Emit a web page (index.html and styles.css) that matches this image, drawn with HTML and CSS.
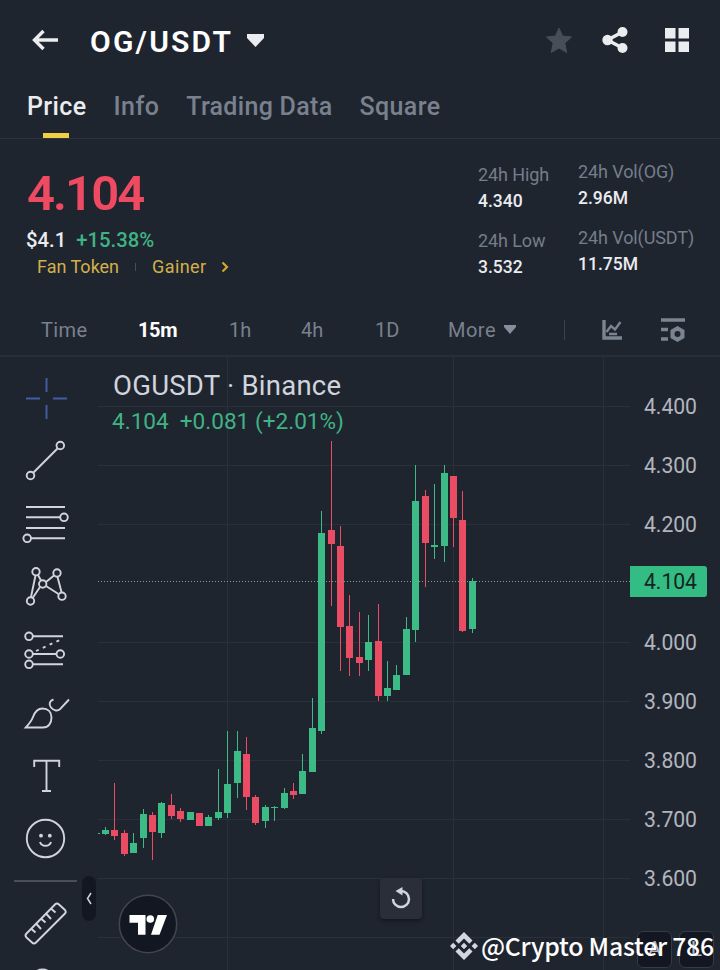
FILE: index.html
```
<!DOCTYPE html>
<html lang="en">
<head>
    <meta charset="UTF-8">
    <meta name="viewport" content="width=device-width, initial-scale=1.0">
    <title>OG/USDT</title>
    <link rel="stylesheet" href="styles.css">
</head>
<body>
    <!-- Header -->
    <header class="header">
        <svg class="back" width="28" height="22" viewBox="0 0 28 22"><path d="M12.500 2 3.500 11l9 9M4 11h23" fill="none" stroke="#eaecef" stroke-width="3.400"/></svg>
        <h1 class="pair">OG/USDT</h1>
        <svg class="caret" width="17" height="13" viewBox="0 0 17 13"><path d="M0 0h17v4L8.500 13 0 4z" fill="#eaecef"/></svg>
        <div class="header-icons">
            <svg width="28" height="28" viewBox="0 0 28 28"><path d="M14 2l3.500 8 9 1-6.700 6.200 1.900 9.300L14 22l-7.700 4.500 1.900-9.300L1.500 11l9-1z" fill="#474d59" stroke="#474d59" stroke-linejoin="round"/></svg>
            <svg class="share" width="28" height="28" viewBox="0 0 28 28"><path d="M21.500 6 6.500 14l15 8" fill="none" stroke="#eaecef" stroke-width="3.500"/><g fill="#eaecef"><circle cx="21.500" cy="6" r="5"/><circle cx="6.500" cy="14" r="5.200"/><circle cx="21.500" cy="22" r="5"/></g></svg>
            <svg width="28" height="28" viewBox="0 0 28 28"><path d="M2 2h10.500v10.500H2zM15.500 2H26v10.500H15.500zM2 15.500h10.500V26H2zM15.500 15.500H26V26H15.500z" fill="#eaecef"/></svg>
        </div>
    </header>

    <!-- Tabs -->
    <nav class="tabs">
        <span class="tab active">Price</span>
        <span class="tab info">Info</span>
        <span class="tab trading">Trading Data</span>
        <span class="tab">Square</span>
    </nav>

    <!-- Price summary -->
    <section class="summary">
        <div class="price-block">
            <div class="last-price">4.104</div>
            <div class="change"><span class="usd">$4.1</span><span class="percent">+15.38%</span></div>
            <div class="tags">
                <span class="fan">Fan Token</span>
                <i class="tag-line"></i>
                <span class="gainer">Gainer</span>
                <svg width="8" height="12" viewBox="0 0 8 12"><path d="M1.500 1.500 6 6l-4.500 4.500" fill="none" stroke="#d3a82a" stroke-width="2.200"/></svg>
            </div>
        </div>
        <div class="stats">
            <div class="stat"><span class="label">24h High</span><span class="value">4.340</span></div>
            <div class="stat"><span class="label">24h Low</span><span class="value">3.532</span></div>
        </div>
        <div class="stats vol">
            <div class="stat"><span class="label">24h Vol(OG)</span><span class="value">2.96M</span></div>
            <div class="stat"><span class="label">24h Vol(USDT)</span><span class="value">11.75M</span></div>
        </div>
    </section>

    <!-- Intervals -->
    <div class="intervals">
        <span class="time">Time</span>
        <span class="selected">15m</span>
        <span class="hour">1h</span>
        <span class="hour4">4h</span>
        <span class="day">1D</span>
        <span class="more">More</span>
        <svg class="more-caret" width="12" height="9" viewBox="0 0 12 9"><path d="M0 0h12v2L6 9 0 2z" fill="#848e9c"/></svg>
        <i class="interval-line"></i>
        <svg class="indicator" width="20" height="20" viewBox="0 0 20 20"><path d="M2 0v18h18" fill="none" stroke="#7b8491" stroke-width="3.400"/><path d="M4.500 12 9 6l4 3.500L18.500 2M7 14h8" fill="none" stroke="#7b8491" stroke-width="2.400"/></svg>
        <svg class="settings" width="26" height="26" viewBox="0 0 26 26"><path d="M1 3h24M1 12.500h7M1 22h7" stroke="#7b8491" stroke-width="3.600"/><path d="m17.500 9 7 4v8l-7 4-7-4v-8z" fill="#7b8491"/><circle cx="17.500" cy="17" r="3" fill="#1f252f"/></svg>
    </div>

    <!-- Chart -->
    <main class="chart">
        <aside class="tools">
            <svg viewBox="0 367 98 63"><path d="M46.500 378v14M46.500 405v14M26 398.500h14M53 398.500h14" stroke="#415da6"/></svg>
            <svg viewBox="0 430 98 63"><path d="m33.500 472.500 24-24"/><circle cx="60.300" cy="445.500" r="3.800"/><circle cx="30.500" cy="475.500" r="3.800"/></svg>
            <svg viewBox="0 493 98 63"><path d="M26 507h39M26 517.300h34M26 528h39M31 538.300h34"/><circle cx="64" cy="517.300" r="3.800"/><circle cx="27.200" cy="538.300" r="3.800"/></svg>
            <svg viewBox="0 556 98 63"><path d="M35.500 575.500 31 597M38 575l3 5.500M40 587l-7 10.500M46 582l8-6.500M57.500 577l4 15M46 586l12.500 8"/><circle cx="36" cy="571.700" r="3.700"/><circle cx="57" cy="573" r="3.700"/><circle cx="42.700" cy="584" r="3.700"/><circle cx="30.500" cy="601" r="3.700"/><circle cx="62" cy="596.200" r="3.700"/></svg>
            <svg viewBox="0 619 98 63"><path d="M33 636.300h30M33 654h23.500M33 664.300h30"/><path d="m36 651 26-12" stroke-dasharray="3 4.500"/><circle cx="29" cy="636.300" r="3.800"/><circle cx="29" cy="654" r="3.800"/><circle cx="60.300" cy="654" r="3.800"/><circle cx="29" cy="664.300" r="3.800"/></svg>
            <svg viewBox="0 682 98 63"><path d="M25.800 727.500H43c5.500 0 8.500-4.500 8.500-10 0-5.500-3.500-9-9-9-4.500 0-7.500 3-9.500 8.500-1.500 4-4 7-7.200 10.500zM53.500 699.500c-4 1-5 5-2.500 8 3 3.500 6.500 4 9.500 1.200l8.500-9.200"/></svg>
            <svg viewBox="0 745 98 63"><path d="M34.200 767v-6.300h25v6.300M46.500 761v30M42 791h9"/></svg>
            <svg viewBox="0 808 98 63"><circle cx="45.500" cy="838.500" r="18.700"/><path d="M40 842c1.500 5 9.500 5 11 0"/><g class="eyes"><circle cx="41" cy="835.700" r="1.900"/><circle cx="49.800" cy="835.700" r="1.900"/></g></svg>
            <svg viewBox="0 871 98 99"><path d="M14 881h63" stroke="#4a4e59"/><path d="M26.500 933.500 55 904.500q2-2 4 0l6 5.500q1.500 1.800 0 3.500L36 942.500q-2 2-4 0l-5.500-5q-2-2 0-4zM31.500 929l4 3.500M36.500 924l4.500 5M41.500 919l4 3.500M46.500 914l4.500 5M51.500 909l4 3.500"/><path d="M37 971c3-2 8-2 11 0"/></svg>
        </aside>
        <svg class="plot" width="622" height="613" viewBox="98 357 622 613">
            <g id="grid"></g>
            <g id="candles"></g>
            <path class="last-line" d="M98 581.500h532"/>
            <g id="axis"></g>
            <path d="M630 566h74q3 0 3 3v25q0 3-3 3h-74z" fill="#33bd85"/>
            <text class="axis-text last" x="644" y="589" textLength="53">4.104</text>
        </svg>

        <div class="legend">
            <div class="symbol">OGUSDT · Binance</div>
            <div class="legend-values"><span>4.104</span><span>+0.081 (+2.01%)</span></div>
        </div>
        <div class="collapse"><svg width="6" height="13" viewBox="0 0 6 13"><path d="M5 1 1.500 6.500 5 12" fill="none" stroke="#d1d4dc" stroke-width="1.500"/></svg></div>
        <svg class="tv-logo" width="60" height="60" viewBox="118 894 60 60"><circle cx="148" cy="924" r="28.700" fill="#131722" stroke="#434651" stroke-width="1.500"/><path d="M129.500 915h16v19.700H138v-12h-8.500zM157.700 915h9.300l-7.500 19.700H151z" fill="#fff"/><circle cx="150.300" cy="919" r="3.800" fill="#fff"/></svg>
        <div class="reset"><svg width="24" height="26" viewBox="0 0 24 26"><path d="M4 13a8 8 0 1 0 8-8" fill="none" stroke="#d1d4dc" stroke-width="2.500"/><path d="M13.500 1v8.500L6.500 5z" fill="#d1d4dc"/></svg></div>
        <div class="scale-button auto">A</div>
        <div class="scale-button log">L</div>
        <div class="watermark">
            <svg width="28" height="28" viewBox="0 0 28 28"><path d="M14 0l8.500 8.500-3.200 3.200L14 6.400l-5.300 5.300-3.200-3.200zM14 28l8.500-8.500-3.200-3.200-5.300 5.300-5.300-5.300-3.200 3.200zM14 10.800l3.200 3.200-3.200 3.200-3.200-3.200zM3.200 10.800 6.400 14l-3.200 3.200L0 14zM24.800 10.800 28 14l-3.200 3.200-3.200-3.200z" fill="#d4d7e2"/></svg>
            <span>@Crypto Master 786</span>
        </div>
    </main>
    <script src="chart.js"></script>
</body>
</html>
```
FILE: styles.css
```
* {
    box-sizing: border-box;
}

body {
    margin: 0;
    width: 720px;
    height: 970px;
    overflow: hidden;
    background-color: #1f252f;
    color: #eaecef;
    font-family: Roboto, sans-serif;
    white-space: nowrap;
}

svg {
    display: block;
    flex: none;
}

/* Header */
.header {
    display: flex;
    align-items: center;
    height: 80px;
    padding: 0 29px 0 31px;
}

.pair {
    width: 142px;
    margin: 2px 0 0 31px;
    font-size: 30px;
    font-weight: 600;
    letter-spacing: 2.2px;
    color: #fff;
}

.caret {
    margin-left: 15px;
}

.header-icons {
    display: flex;
    gap: 31px;
    margin-left: auto;
}

.share {
    margin: 0 3px 0 -3px;
}

/* Tabs */
.tabs {
    display: flex;
    gap: 27px;
    height: 59px;
    padding: 11px 27px 0;
    border-bottom: 1px solid #2d343e;
    font-size: 25px;
    font-weight: 500;
    line-height: 32px;
    color: #79818e;
}

.tab {
    letter-spacing: 0.4px;
}

.trading {
    letter-spacing: 0.3px;
}

.active {
    position: relative;
    color: #eaecef;
}

.active::after {
    content: "";
    position: absolute;
    left: 16px;
    top: 42px;
    width: 26px;
    height: 5px;
    background-color: #f0cf45;
}

/* Price summary */
.summary {
    display: flex;
    height: 164px;
    padding: 22px 0 0 27px;
}

.price-block {
    width: 451px;
}

.last-price {
    height: 66px;
    font-size: 49px;
    font-weight: 600;
    line-height: 66px;
    letter-spacing: -1.9px;
    color: #ee4b63;
}

.change {
    display: flex;
    gap: 10px;
    margin-left: -1px;
    font-size: 20.3px;
    font-weight: 500;
    line-height: 27px;
}

.percent {
    color: #3fb384;
}

.tags {
    display: flex;
    align-items: center;
    height: 25px;
    padding-left: 10px;
    font-size: 18px;
    color: #d3b04a;
}

.tag-line {
    width: 1px;
    height: 8px;
    margin: 0 16px;
    background-color: #474d59;
}

.gainer {
    margin-right: 14px;
    letter-spacing: 0.4px;
}

.stats {
    width: 100px;
    padding-top: 1px;
}

.vol {
    width: 130px;
    margin-top: -3px;
}

.stat {
    display: flex;
    flex-direction: column;
    height: 66px;
    font-size: 18px;
    line-height: 26px;
}

.label {
    letter-spacing: -0.1px;
    color: #757d8a;
}

.value {
    font-weight: 500;
    font-size: 17.5px;
}

/* Intervals */
.intervals {
    display: flex;
    align-items: center;
    height: 54px;
    padding-left: 41px;
    padding-top: 1px;
    border-bottom: 2px solid #282e38;
    font-size: 20px;
    color: #79818e;
}

.selected {
    font-weight: 700;
    color: #fff;
}

.time {
    width: 97px;
    letter-spacing: 0.4px;
}

.selected {
    width: 91px;
    letter-spacing: -0.4px;
}

.hour {
    width: 72px;
}

.hour4 {
    width: 74px;
}

.day {
    width: 73px;
}

.more {
    width: 56px;
    letter-spacing: 0.5px;
}

.interval-line {
    width: 1px;
    height: 20px;
    margin: 0 37px 0 48px;
    background-color: #3a414d;
}

.settings {
    margin-left: 38px;
}

/* Chart */
.chart {
    position: relative;
    display: flex;
    height: 613px;
}

.tools {
    width: 98px;
    padding-top: 10px;
    fill: none;
    stroke: #d1d4dc;
    stroke-width: 1.9;
}

.tools svg {
    width: 98px;
}

.eyes {
    fill: #d1d4dc;
    stroke: none;
}

#grid {
    stroke: #2a303a;
}

.last-line {
    stroke: #75a493;
    stroke-dasharray: 1 2;
}

.axis-text {
    font-size: 21.2px;
    fill: #b2b5be;
}

.last {
    fill: #16241f;
}

.legend {
    position: absolute;
    left: 113px;
    top: 11px;
}

.symbol {
    font-size: 27.500px;
    line-height: 35px;
    letter-spacing: 0.25px;
    color: #d1d4dc;
}

.legend-values {
    display: flex;
    gap: 11px;
    margin: -1px 0 0 -1px;
    font-size: 22.6px;
    line-height: 40px;
    color: #3fb384;
}

.collapse {
    position: absolute;
    left: 82px;
    top: 519px;
    display: flex;
    align-items: center;
    justify-content: center;
    width: 14px;
    height: 45px;
    border-radius: 7px;
    background-color: #131722;
}

.tv-logo {
    position: absolute;
    left: 118px;
    top: 537px;
}

.reset {
    position: absolute;
    left: 380px;
    top: 521px;
    display: flex;
    align-items: center;
    justify-content: center;
    width: 42px;
    height: 41px;
    border-radius: 4px;
    background-color: #2a2e39;
    box-shadow: 0 2px 4px rgba(0, 0, 0, 0.4);
}

.scale-button {
    position: absolute;
    top: 574px;
    width: 35px;
    height: 37px;
    border: 1px solid #363a45;
    border-radius: 6px;
    background-color: #131722;
    font-size: 21px;
    line-height: 35px;
    text-align: center;
    color: #b2b5be;
}

.auto {
    left: 637px;
}

.log {
    left: 679px;
}

.watermark {
    position: absolute;
    left: 450px;
    top: 571px;
    display: flex;
    align-items: center;
    gap: 3px;
    height: 36px;
    font-family: "Noto Sans CJK SC", sans-serif;
    font-size: 24.8px;
    font-weight: 500;
    line-height: 36px;
    letter-spacing: -0.25px;
    color: #fff;
}

.watermark span {
    margin-top: -3px;
}
```
FILE: chart.js
```
const UP = '#3dbb87';
const DOWN = '#ea4c63';

// left edge, wick top, body top, body bottom, wick bottom, colour
const candles = [
    [102, 827, 830, 834, 835, UP],
    [111, 783, 830, 836, 840, DOWN],
    [121, 830, 833, 854, 856, DOWN],
    [130, 833, 843, 853, 853, UP],
    [140, 809, 814, 838, 848, UP],
    [149, 812, 815, 832, 860, DOWN],
    [158, 802, 803, 833, 838, UP],
    [168, 794, 805, 816, 819, DOWN],
    [177, 808, 811, 819, 822, DOWN],
    [187, 812, 812, 820, 820, UP],
    [196, 813, 813, 826, 826, DOWN],
    [205, 815, 817, 826, 826, UP],
    [215, 769, 812, 818, 820, UP],
    [224, 731, 784, 813, 818, UP],
    [234, 731, 751, 783, 798, UP],
    [243, 737, 754, 797, 810, DOWN],
    [252, 795, 797, 823, 825, DOWN],
    [262, 805, 807, 821, 828, UP],
    [271, 806, 807, 808, 821, UP],
    [281, 788, 793, 808, 809, UP],
    [290, 783, 791, 795, 799, DOWN],
    [299, 754, 771, 794, 794, UP],
    [309, 698, 728, 772, 772, UP],
    [318, 511, 533, 731, 734, UP],
    [328, 441, 530, 544, 606, DOWN],
    [337, 526, 546, 627, 671, DOWN],
    [346, 595, 626, 658, 676, DOWN],
    [356, 612, 657, 663, 676, DOWN],
    [365, 615, 642, 660, 671, UP],
    [375, 604, 641, 696, 701, DOWN],
    [384, 661, 688, 696, 701, UP],
    [393, 665, 675, 690, 690, UP],
    [403, 617, 629, 675, 675, UP],
    [412, 465, 501, 630, 642, UP],
    [422, 490, 496, 543, 587, DOWN],
    [431, 484, 545, 547, 559, UP],
    [441, 465, 473, 546, 562, UP],
    [450, 476, 476, 518, 547, DOWN],
    [459, 491, 520, 631, 632, DOWN],
    [469, 578, 581, 629, 633, UP]
];

const labels = [
    ['4.400', 406], ['4.300', 465], ['4.200', 524], ['4.000', 642],
    ['3.900', 701], ['3.800', 760], ['3.700', 819], ['3.600', 878], ['', 937]
];

let grid = '';
let axis = '';
labels.forEach(([text, y]) => {
    grid += `<path d="M98 ${y + 0.5}h532"/>`;
    if (text) {
        axis += `<text class="axis-text" x="644" y="${y + 8}" textLength="53">${text}</text>`;
    }
});
[227, 453, 603].forEach(x => {
    grid += `<path d="M${x + 0.5} 357v613"/>`;
});

let bars = `<rect x="98" y="833" width="2" height="1" fill="${UP}"/>`;
candles.forEach(([x, high, top, bottom, low, color]) => {
    bars += `<rect x="${x + 3}" y="${high}" width="1" height="${low - high}" fill="${color}"/>`;
    bars += `<rect x="${x}" y="${top}" width="7" height="${bottom - top}" fill="${color}"/>`;
});

document.getElementById('grid').innerHTML = grid;
document.getElementById('axis').innerHTML = axis;
document.getElementById('candles').innerHTML = bars;
```
